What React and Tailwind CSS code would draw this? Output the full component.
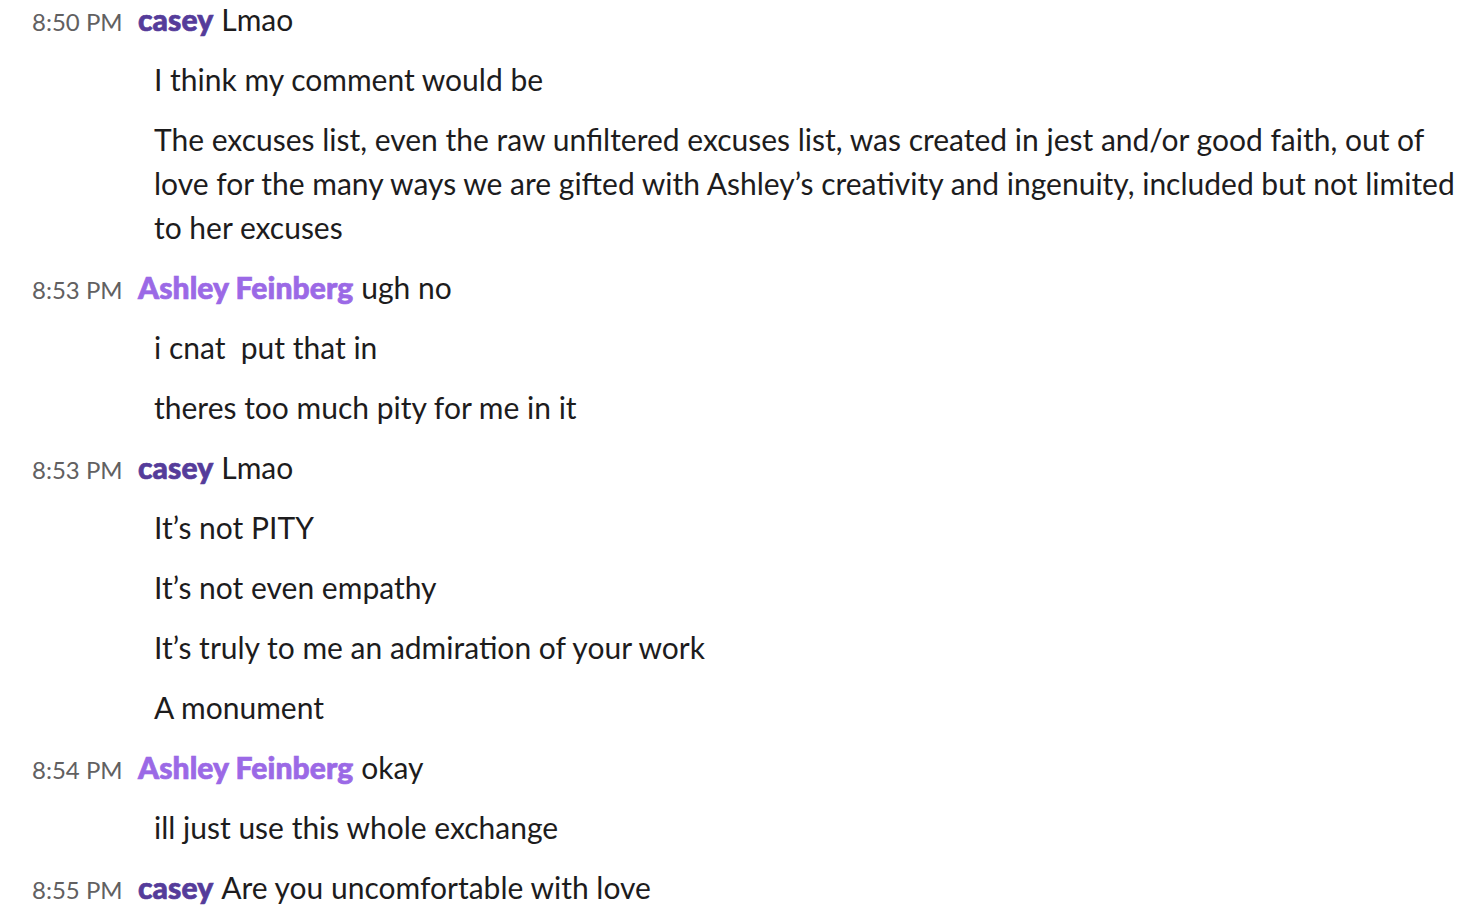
import React from "react";

const CASEY = "text-[#553c9a]";
const ASHLEY = "text-[#9b69e6]";

const groups = [
  { time: "8:50 PM", name: "casey", color: CASEY, first: "Lmao", rest: [
    "I think my comment would be",
    "The excuses list, even the raw unfiltered excuses list, was created in jest and/or good faith, out of love for the many ways we are gifted with Ashley\u2019s creativity and ingenuity, included but not limited to her excuses",
  ]},
  { time: "8:53 PM", name: "Ashley Feinberg", color: ASHLEY, first: "ugh no", rest: [
    "i cnat\u00a0 put that in",
    "theres too much pity for me in it",
  ]},
  { time: "8:53 PM", name: "casey", color: CASEY, first: "Lmao", rest: [
    "It\u2019s not PITY",
    "It\u2019s not even empathy",
    "It\u2019s truly to me an admiration of your work",
    "A monument",
  ]},
  { time: "8:54 PM", name: "Ashley Feinberg", color: ASHLEY, first: "okay", rest: [
    "ill just use this whole exchange",
  ]},
  { time: "8:55 PM", name: "casey", color: CASEY, first: "Are you uncomfortable with love", rest: [] },
];

export default function App() {
  return (
    <div className="w-[1474px] h-[918px] overflow-hidden bg-white text-[#1d1c1d]" style={{ fontFamily: "Lato, 'Noto Sans', sans-serif" }}>
      <div className="flex flex-col gap-4 -mt-[3px]">
        {groups.map((g, i) => (
          <React.Fragment key={i}>
            <div className="text-[30px] leading-[44px] h-[44px] whitespace-nowrap">
              <span className="inline-block w-[138px] pl-[32px] text-[24px] text-[#616061]">{g.time}</span>
              <span className={`font-black tracking-[0.1px] [-webkit-text-stroke:0.7px_currentColor] ${g.color}`}>{g.name}</span>
              <span className="ml-[8px]">{g.first}</span>
            </div>
            {g.rest.map((t, j) => (
              <div key={j} className="pl-[154px] pr-[14px] text-[30px] leading-[44px]">{t}</div>
            ))}
          </React.Fragment>
        ))}
      </div>
    </div>
  );
}
